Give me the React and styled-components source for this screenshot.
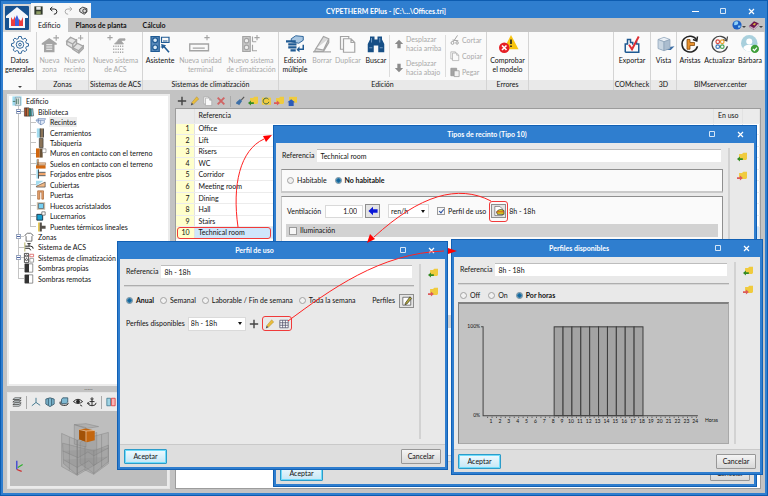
import styled, { createGlobalStyle, css } from "styled-components";

const GlobalStyle = createGlobalStyle`
  * {
    box-sizing: border-box;
  }
  body {
    margin: 0;
    overflow: hidden;
    font-family: Lato, "Open Sans", sans-serif;
    font-size: 7px;
    line-height: 9px;
    color: #111;
  }
  button, input, select {
    font: inherit;
    color: inherit;
    margin: 0;
    padding: 0;
    border: 0;
    background: none;
  }
  svg {
    display: block;
    flex: none;
  }
`;

/* ---------- main window ---------- */

const Window = styled.div`
  position: relative;
  display: flex;
  flex-direction: column;
  min-height: 100vh;
  border: 1px solid #0d5cb0;
  background: #c3c3c3;
  box-shadow: inset 0 0 0 2px #2f7ecf;
  padding: 0 2px 2px;
`;

const Header = styled.header`
  display: flex;
  background: #2f7ecf;
`;

const AppButton = styled.button`
  width: 28px;
  margin-top: 3px;
  padding: 2px;
  background: #d6d6d6;
`;

const HeaderRows = styled.div`
  flex: 1;
`;

const TitleBar = styled.div`
  display: flex;
  align-items: center;
  height: 17px;
`;

const QuickAccess = styled.div`
  display: flex;
  align-items: center;
  justify-content: space-around;
  align-self: flex-end;
  width: 60px;
  height: 15px;
  background: #f7f7f7;
`;

const Title = styled.h1`
  flex: 1;
  margin: 0;
  padding-top: 3px;
  font-size: 7px;
  font-weight: 700;
  text-align: center;
  color: #fff;
`;

const Controls = styled.div`
  display: flex;
  padding-top: 3px;
`;

const ControlButton = styled.button`
  display: flex;
  justify-content: center;
  align-items: center;
  width: 28px;
  height: 12px;
`;

const IconButton = styled.button`
  display: flex;
  align-items: center;
  justify-content: center;
`;

const TabBar = styled.nav`
  display: flex;
  height: 14px;
  background: #c3c3c3;
`;

const Tab = styled.button`
  padding: 0 ${({ $active }) => ($active ? 7 : 8)}px;
  font-weight: ${({ $active }) => ($active ? 400 : 700)};
  background: ${({ $active }) => ($active ? "#fafafa" : "none")};
`;

const HelpIcons = styled.div`
  display: flex;
  align-items: center;
  gap: 3px;
  margin-left: auto;
  padding-right: 2px;
`;

/* ---------- ribbon ---------- */

const Ribbon = styled.div`
  display: flex;
  height: 58px;
  background: #fafafa;
`;

const Group = styled.section`
  display: flex;
  flex-direction: column;
  ${({ $width }) => ($width ? `width: ${$width}px;` : "flex: 1;")}
  border-right: 1px solid #d4d4d4;
`;

const GroupItems = styled.div`
  display: flex;
  flex: 1;
  padding-top: 3px;
`;

const GroupName = styled.div`
  height: 10px;
  text-align: center;
  white-space: nowrap;
  background: #e9e9e9;
`;

const RibbonButton = styled.button`
  display: flex;
  flex: none;
  flex-direction: column;
  align-items: center;
  gap: 3px;
  width: ${({ $width }) => $width}px;
  white-space: nowrap;
  color: ${({ disabled }) => (disabled ? "#a9a9a9" : "#111")};
`;

const ButtonText = styled.span`
  line-height: 9px;
  white-space: pre;
  text-align: center;
`;

const SmallButtons = styled.div`
  display: flex;
  flex: none;
  flex-direction: column;
  justify-content: space-between;
  width: ${({ $width }) => $width}px;
  padding-left: 4px;
  border-left: 1px solid #dcdcdc;
  margin-bottom: 3px;
`;

const SmallButton = styled.button`
  display: flex;
  align-items: center;
  gap: 2px;
  text-align: left;
  white-space: pre;
  color: #a9a9a9;
`;

const DropMark = styled.span`
  align-self: center;
  margin: auto auto 2px;
  border: 2px solid transparent;
  border-top-color: #444;
  border-bottom: 0;
`;

/* ---------- workspace ---------- */

const Workspace = styled.main`
  display: flex;
  flex: 1;
  gap: 5px;
  padding: 4px;
`;

const LeftColumn = styled.aside`
  display: flex;
  flex-direction: column;
  width: 163px;
`;

const TreePanel = styled.div`
  flex: 1;
  border: 2px solid #ececec;
  background: #fff;
`;

const Splitter = styled.div`
  height: 6px;
  text-align: center;
  line-height: 3px;
  color: #666;
`;

const Tree = styled.ul`
  display: grid;
  grid-template-rows: repeat(18, 1fr);
  height: 188px;
  margin: 0;
  padding: 0 0 0 3px;
  list-style: none;
`;

const TreeRow = styled.li`
  display: flex;
  align-items: center;
  white-space: nowrap;
`;

const TreeLabel = styled.span`
  margin-left: 3px;
  padding: 0 1px;
  line-height: 10px;
  background: ${({ $selected }) => ($selected ? "#ececec" : "none")};
`;

const Branch = styled.span`
  display: flex;
  align-items: center;
  align-self: stretch;
  width: 12px;
  background:
    linear-gradient(#c4c4c4, #c4c4c4) 6px 0 / 1px ${({ $last }) => ($last ? "50%" : "100%")} no-repeat,
    ${({ $through }) =>
      $through
        ? "none"
        : "linear-gradient(#c4c4c4, #c4c4c4) 6px 50% / 6px 1px no-repeat"};
`;

const Expander = styled.button`
  width: 5px;
  height: 5px;
  margin-left: 4px;
  border: 1px solid #9aa6bd;
  background: linear-gradient(#4a62a5, #4a62a5) center / 3px 1px no-repeat #fff;
`;

const ViewPanel = styled.div`
  display: flex;
  flex-direction: column;
  height: 97px;
  padding: 0 2px 2px;
  border: 1px solid #e4e4e4;
  background: #ebebeb;
`;

const ViewTools = styled.div`
  display: flex;
  align-items: center;
  gap: 4px;
  height: 18px;
  padding-left: 2px;
`;

const ToolDivider = styled.span`
  width: 1px;
  height: ${({ $height }) => $height || 13}px;
  background: #a9a9a9;
`;

const Viewport = styled.div`
  flex: 1;
  min-height: 0;
  background: #bebebe;
`;

const RightColumn = styled.section`
  display: flex;
  flex: 1;
  flex-direction: column;
`;

const ListTools = styled.div`
  display: flex;
  align-items: center;
  gap: 3px;
  height: 14px;
  padding-left: 2px;
  ${ToolDivider} {
    margin: 0 1px;
  }
`;

const TablePanel = styled.div`
  flex: 1;
  border: 1px solid #9c9c9c;
  background: #fff;
`;

const Table = styled.table`
  width: 100%;
  height: 130px;
  border-collapse: collapse;
  th, td {
    padding: 0 4px;
    font-weight: 400;
    text-align: left;
    border-right: 1px solid #e2e2e2;
    border-bottom: 1px solid #ececec;
  }
  th {
    height: 14px;
    padding: 0 2px 0 4px;
    background: #ebebeb;
  }
`;

const NumberCell = styled.td`
  width: 18px;
  background: #ffffcc;
  && {
    text-align: right;
  }
`;

const Row = styled.tr`
  background: ${({ $selected }) => ($selected ? "#cfe6fb" : "#fff")};
`;

/* ---------- dialogs ---------- */

const Dialog = styled.section`
  position: absolute;
  left: ${({ $left }) => $left}px;
  top: ${({ $top }) => $top}px;
  display: flex;
  flex-direction: column;
  width: ${({ $width }) => $width}px;
  height: ${({ $height }) => $height}px;
  padding: 0 2px 2px;
  border: 1px solid #1160b4;
  background: #2f7ecf;
`;

const DialogTitle = styled.header`
  display: flex;
  align-items: center;
  height: 17px;
  color: #fff;
`;

const DialogName = styled.h2`
  flex: 1;
  margin: 0;
  font-size: 7px;
  font-weight: 700;
  text-align: center;
`;

const DialogBody = styled.div`
  display: flex;
  flex: 1;
  min-height: 0;
  background: #e9e9e9;
`;

const DialogMain = styled.div`
  display: flex;
  flex: 1;
  flex-direction: column;
  min-width: 0;
  padding: 6px 5px 5px 4px;
`;

const DialogSide = styled.div`
  display: flex;
  flex: none;
  flex-direction: column;
  align-items: center;
  gap: 9px;
  width: 26px;
  margin: 5px 0;
  padding-top: 4px;
  border-left: 2px solid #d2d2d2;
`;

const DialogFooter = styled.footer`
  display: flex;
  justify-content: space-between;
  align-items: center;
  height: 23px;
  padding: 0 4px;
  border-top: 1px solid #c9c9c9;
  background: #dedede;
`;

const PushButton = styled.button`
  width: ${({ $primary }) => ($primary ? 43 : 40)}px;
  height: 15px;
  border: 1px solid #979797;
  border-radius: 1px;
  background: linear-gradient(#f4f4f4, #d8d8d8);
  ${({ $primary }) =>
    $primary &&
    css`
      border-color: #2d9cc9;
      box-shadow: inset 0 0 0 1px #6fdcfb;
      background: linear-gradient(#effaff, #c5e6f5);
    `}
`;

const FieldRow = styled.label`
  display: flex;
  align-items: center;
  gap: 3px;
  padding: 0 2px;
`;

const TextInput = styled.input`
  flex: 1;
  min-width: 0;
  height: 13px;
  padding: 0 3px;
  border-top: 1px solid #bdbdbd;
  background: #fff;
`;

const NumberInput = styled.input`
  width: 38px;
  height: 13px;
  padding-right: 5px;
  border: 1px solid #d9d9d9;
  text-align: right;
  background: #fff;
`;

const Rule = styled.hr`
  width: 100%;
  height: 2px;
  margin: 7px 0 0;
  border: 0;
  border-top: 1px solid #aeaeae;
  border-bottom: 1px solid #d6d6d6;
`;

const Options = styled.div`
  display: flex;
  align-items: center;
  gap: ${({ $gap }) => $gap || 6}px;
  height: ${({ $height }) => $height}px;
  margin-top: ${({ $top }) => $top || 0}px;
  padding-left: 2px;
  white-space: nowrap;
`;

const Choice = styled.label`
  display: flex;
  align-items: center;
  gap: 3px;
  white-space: nowrap;
  &:has(input[type="radio"]:checked) {
    font-weight: 700;
  }
`;

const EditProfiles = styled.span`
  display: flex;
  align-items: center;
  gap: 4px;
  margin-left: auto;
`;

const Radio = styled.input.attrs({ type: "radio" })`
  appearance: none;
  width: 7px;
  height: 7px;
  border: 1px solid #a2a2a2;
  border-radius: 50%;
  background: #f1f1f1;
  &:checked {
    border-color: #6c8798;
    background: radial-gradient(circle, #16659a 0 1px, #2b7fb0 2px, #d4e6ef 3px);
  }
`;

const CheckBox = styled.input.attrs({ type: "checkbox" })`
  appearance: none;
  width: 8px;
  height: 8px;
  border: 1px solid #9a9a9a;
  background: #f6f6f6;
  &:checked::after {
    content: "";
    display: block;
    width: 2px;
    height: 4px;
    margin: 0 0 0 2px;
    border: solid #2a4fa0;
    border-width: 0 1px 1px 0;
    transform: rotate(40deg);
  }
`;

const SelectBox = styled.span`
  display: grid;
  align-items: center;
  width: ${({ $width }) => $width}px;
  height: 14px;
  border: 1px solid #dadada;
  background: #fff;
  > * {
    grid-area: 1 / 1;
  }
`;

const Select = styled.select`
  appearance: none;
  width: 100%;
  padding-left: 2px;
`;

const SelectMark = styled.span`
  justify-self: end;
  margin-right: 3px;
  border: 2px solid transparent;
  border-top: 3px solid #111;
  border-bottom: 0;
  pointer-events: none;
`;

const ToolButton = styled.button`
  display: flex;
  align-items: center;
  justify-content: center;
  width: 15px;
  height: 14px;
  border: 1px solid #8e8e8e;
  background: #e4e4e4;
`;

const Highlight = styled.span`
  display: flex;
  align-items: center;
  justify-content: space-around;
  width: ${({ $width }) => $width}px;
  height: ${({ $height }) => $height}px;
  border: 1px solid #f03a3a;
  border-radius: 3px;
`;

const RowHighlight = styled(Highlight)`
  position: absolute;
  left: 176px;
  top: 226px;
`;

const Box = styled.div`
  padding: 5px 4px;
  border: 1px solid #c9c9c9;
  border-top: 1px solid #8f8f8f;
  border-right-color: #8f8f8f;
  background: #fafafa;
`;

const KindBox = styled(Box)`
  display: flex;
  align-items: center;
  gap: 8px;
  height: 23px;
  margin: 7px 0 4px 1px;
  padding-left: 5px;
  box-shadow: 0 1px 0 #c9c9c9;
`;

const SystemsBox = styled(Box)`
  flex: 1;
  margin-left: 1px;
`;

const SystemRow = styled.div`
  display: flex;
  align-items: center;
  height: 18px;
  margin-bottom: 4px;
  padding-left: 1px;
  white-space: nowrap;
`;

const Spacer = styled.span`
  width: ${({ $width }) => $width}px;
`;

const SectionBar = styled.div`
  display: flex;
  align-items: center;
  height: 13px;
  margin-bottom: 78px;
  padding-left: 3px;
  background: #d2d2d2;
`;

const ChartFrame = styled.div`
  display: flex;
  flex: 1;
  min-height: 0;
  margin-top: 2px;
  border: 1px solid #a8a8a8;
  border-top: 2px solid #808080;
  border-left-color: #808080;
  background: #c2c2c2;
`;

const Arrows = styled.svg`
  position: absolute;
  left: -1px;
  top: -1px;
  pointer-events: none;
`;

/* ---------- drawings ---------- */

const G = "#a4a4a4";
const B = "#1f5a93";

const glyphs = {
  gear: (
    <g fill="none" stroke={B} strokeWidth="1.2">
      <path d="M10.3 2h3.4l.6 2.8 2 .9 2.500-1.600 2.300 2.400-1.500 2.400.8 2 2.900.7v3.200l-2.900.7-.8 2 1.500 2.400-2.300 2.300-2.500-1.500-2 .8-.6 2.900h-3.400l-.6-2.900-2-.8-2.500 1.500-2.300-2.300 1.500-2.400-.8-2-2.900-.7v-3.200l2.900-.7.8-2-1.500-2.400 2.300-2.400 2.500 1.600 2-.9z" />
      <circle cx="12" cy="12.800" r="5" />
      <circle cx="12" cy="12.800" r="1.800" />
    </g>
  ),
  zone: (
    <g fill={G}>
      <path d="M1 11 11 4l10 7v2h-3v10H4V13H1z" />
      <path d="M7 13h8M7 16h8M7 19h8" stroke="#fafafa" strokeWidth="1.300" />
      <path d="M19.500 0h1.500v3h3v1.500h-3v3h-1.500v-3h-3V3h3z" />
    </g>
  ),
  room: (
    <g fill="#e2e2e2" stroke={G} strokeWidth="1.800">
      <path d="m1 8 5-5 8 4-5 5zM1 8v5l8 5v-6M9 12l5-5v5l-5 5M9 17l6-6 8 4-6 6zM9 17v2l8 5v-3M17 21l6-6v3l-6 6" />
      <path d="M16 4h7M19.500 0v7" strokeWidth="1.400" />
    </g>
  ),
  shower: (
    <g fill={G} stroke={G}>
      <path d="M4 0v7M.5 3.500h7" strokeWidth="1.500" />
      <path d="M24 5h-7q-2 0-3 3l-4 4h12l-3-4q1-1 5-1z" />
      <path d="M9 14v2m0 2v2m0 2v2M12 14v2m0 2v2m0 2v2M15 14v2m0 2v2m0 2v2M18 14v2m0 2v2m0 2v2M21 14v2m0 2v2m0 2v2" strokeWidth="1.500" />
    </g>
  ),
  wizard: (
    <g fill="none" stroke={B} strokeWidth="1.600">
      <path d="M0 2h11v20H0z" fill="#5b8bbb" />
      <circle cx="5.500" cy="7" r="3.200" fill="#dcebf7" />
      <circle cx="5.500" cy="16.500" r="3.200" fill="#dcebf7" />
      <path d="M14 3h10v7H14zM16 8h6M13 16h3" />
      <path d="m17 15 7 8" strokeWidth="2.200" />
      <path d="m14.500 13 4 1-3 3z" fill={B} />
    </g>
  ),
  unit: (
    <g fill="none" stroke={G} strokeWidth="1.800">
      <path d="M-3 12h25v9H-3zM1 17.500h16" />
      <path d="M20 0v7M16.500 3.500h7" strokeWidth="1.500" />
    </g>
  ),
  climate: (
    <g fill="none" stroke={G} strokeWidth="1.500">
      <path d="M1 2h10v20H1z" fill="#c9c9c9" />
      <path d="M20 0v7M16.500 3.500h7M14 9V2M14 9h5M14 13v8h6" />
      <circle cx="6" cy="7.500" r="3" fill="#eee" />
      <circle cx="6" cy="16.500" r="3" fill="#eee" />
    </g>
  ),
  multi: (
    <g fill={B}>
      <path d="m7 5 6-4 10 1v5l-6 4-10-2z" fill="#a9c7e2" stroke={B} strokeWidth="1.200" />
      <path d="M0 7h13v3H0zM3 11h11v3H3zM3 15h11v3H3zM6 19h7v3H6z" />
      <path d="M22 13v5h-4v-3l-4 4.500 4 3.500v-3h6v-7z" />
    </g>
  ),
  erase: (
    <g fill="#d9d9d9" stroke={G} strokeWidth="1.600">
      <path d="M4 18 14 2l7 3-7 15zM4 18l-2 4h12l7-12V5" />
      <path d="M0 22.500h24" />
    </g>
  ),
  copy: (
    <g fill="#fafafa" stroke={G} strokeWidth="1.600">
      <path d="M2 2h11v17H2z" />
      <path d="M6 5h10l5 5v13H6zM16 5v5h5" />
    </g>
  ),
  binoculars: (
    <g fill="#174f86">
      <path d="M4 2h6v4h4V2h6v4l3 6v11h-8v-9H9v9H1V12l3-6z" />
      <path d="M3 17h4M17 17h4M6 4v6M17 4v6" stroke="#8fb3d6" />
    </g>
  ),
  check: (
    <g>
      <path d="m16 0 10 19H6z" fill="#f8c40f" />
      <path d="M16 6v6m0 2v2" stroke="#222" strokeWidth="2.200" />
      <circle cx="7" cy="17" r="7" fill="#e51e25" />
      <path d="m4 14 6 6m0-6-6 6" stroke="#fff" strokeWidth="2.200" />
    </g>
  ),
  exportCheck: (
    <g fill="none" strokeWidth="2">
      <path d="M3 23V12h3V6h4v4h3v3M3 23h18V12h-3V8" stroke={B} />
      <path d="m8 13 4 6L21 2" stroke="#dc2f34" strokeWidth="2.600" />
    </g>
  ),
  cube: (
    <g>
      <path d="m12 17 14-2-5 5H7z" fill="#3b6ea5" />
      <path d="m4 6 8-3 8 3-8 3z" fill="#eaf0f6" stroke="#8ea3b8" />
      <path d="m4 6 8 3v12l-8-3z" fill="#c9d6e2" stroke="#8ea3b8" />
      <path d="m20 6-8 3v12l8-3z" fill="#abbdcf" stroke="#8ea3b8" />
    </g>
  ),
  edges: (
    <g fill="none" stroke="#222" strokeWidth="2">
      <path d="M21 7A10.500 10.500 0 1 0 22 15" />
      <path d="m22 2-1 6-5-2" />
      <path d="M8 6v13h4v-5h6v-4h-6V6z" fill="#e8912d" stroke="#7c4306" strokeWidth="1" />
    </g>
  ),
  refresh: (
    <g fill="none" stroke="#444" strokeWidth="1.600">
      <path d="M21 7A10.500 10.500 0 1 0 22 15" />
      <path d="m22 2-1 6-5-2" />
      <circle cx="9" cy="9" r="2.400" stroke="#d8463b" strokeWidth="1.600" />
      <circle cx="15" cy="9" r="2.400" stroke="#eb9e28" strokeWidth="1.600" />
      <circle cx="9" cy="15.500" r="2.400" stroke="#3b78b9" strokeWidth="1.600" />
      <circle cx="15" cy="15.500" r="2.400" stroke="#47a251" strokeWidth="1.600" />
    </g>
  ),
  user: (
    <g>
      <circle cx="11" cy="11" r="11" fill="#a9d0dd" />
      <circle cx="11" cy="8.500" r="4" fill="#fff" />
      <path d="M3 18q1-5 8-5t8 5q-8 8-16 0z" fill="#fff" />
      <circle cx="18.500" cy="18.500" r="5.500" fill="#3f9f3a" />
      <path d="m15.800 18.500 2 2.200 3.500-4" fill="none" stroke="#fff" strokeWidth="1.600" />
    </g>
  ),
  up: <path d="M12 2 22 12h-6v10H8V12H2z" fill="#8b8b8b" />,
  down: <path d="M12 22 2 12h6V2h8v10h6z" fill="#8b8b8b" />,
  cut: (
    <g fill="none" stroke={G} strokeWidth="2.400">
      <path d="M18 1 8 16M20 14 6 12" />
      <circle cx="6" cy="19" r="3.500" />
      <circle cx="17" cy="19" r="3" />
    </g>
  ),
  paste: (
    <g fill={G} stroke="#8f8f8f" strokeWidth="1.600">
      <path d="M2 3h14v18H2z" />
      <path d="M10 9h12v14H10z" fill="#f1f1f1" />
    </g>
  ),
  save: (
    <g>
      <path d="M1 1h22v22H1z" fill="#31392c" />
      <path d="M6 2h12v8H6z" fill="#e8e8e8" />
      <path d="M6 14h12v8H6z" fill="#8d9b62" />
    </g>
  ),
  undo: <path d="M9 2 3 8l6 6M3 8h11q7 0 7 7t-8 7" fill="none" stroke="#222" strokeWidth="2.600" />,
  redo: <path d="m15 2 6 6-6 6m6-6H10q-7 0-7 7t8 7" fill="none" stroke="#aaa" strokeWidth="2.600" />,
  printer: (
    <g fill="#ddd" stroke="#333" strokeWidth="2.400">
      <path d="m2 8 8-5 11 4v9l-7 6-12-7z" />
      <circle cx="15" cy="13" r="5" />
    </g>
  ),
  globe: (
    <g>
      <circle cx="12" cy="12" r="11" fill="#1c5fc4" />
      <path d="M6 4q8-3 9 2t-5 6-5-1zM14 14q6-2 7 0t-5 6z" fill="#8fd0f7" />
    </g>
  ),
  book: (
    <g>
      <path d="m1 14 11-11 11 5-11 12z" fill="#6d1750" />
      <path d="m1 14 11 6 11-12v4L12 23 1 17z" fill="#efe6ee" stroke="#6d1750" />
      <path d="m9 11 4-4 4 2-4 4z" fill="#d9b63a" />
    </g>
  ),
  plus: <path d="M12 2v20M2 12h20" stroke="#444" strokeWidth="3.400" />,
  pencil: (
    <g>
      <path d="M4 16 16 2l5 5L8 20z" fill="#e9bd3c" stroke="#a58025" />
      <path d="m4 16 4 4-6 3z" fill="#444" />
    </g>
  ),
  cross: <path d="m4 4 16 16M20 4 4 20" stroke="#d06464" strokeWidth="4.500" />,
  brush: (
    <g>
      <path d="m14 9 7-8 2 2-7 8z" fill="#555" />
      <path d="M3 15 12 7l5 5-7 10-3-2-4-1z" fill="#3d6fa7" />
    </g>
  ),
  cycle: (
    <g>
      <path d="M2 4h22v17H2z" fill="#f0cb3e" />
      <path d="M18 8a7 7 0 1 0 1 6" fill="none" stroke="#40674b" strokeWidth="2.400" />
    </g>
  ),
  home: (
    <g>
      <path d="M5 2h19v14H5z" fill="#f0cb3e" />
      <path d="m1 15 9-7 9 7h-3v9H4v-9z" fill="#2c5bb8" />
    </g>
  ),
  folderIn: (
    <g>
      <path d="M5 5h7l3-3h9v14l-2 3H5z" fill="#f0cb3e" />
      <path d="m0 17 7-6v4h7v4H7v4z" fill="#338a22" />
    </g>
  ),
  folderOut: (
    <g>
      <path d="M5 5h7l3-3h9v14l-2 3H5z" fill="#f0cb3e" />
      <path d="m14 17-7-6v4H0v4h7v4z" fill="#dc5a5a" />
    </g>
  ),
  blueLeft: <path d="M1 12 12 2v6h11v8H12v6z" fill="#0a17d8" />,
  profile: (
    <g>
      <path d="M2 1h12l6 6v16H2z" fill="#fff" stroke="#555" strokeWidth="1.500" />
      <path d="M6 14q7-9 18-3v9H8z" fill="#e3d320" stroke="#222" strokeWidth="1.600" />
      <path d="M6 14h18" stroke="#c23125" strokeWidth="2" />
    </g>
  ),
  edit: (
    <g>
      <path d="M2 3h19v19H2z" fill="#fff" stroke="#333" strokeWidth="1.500" />
      <path d="M8 17 19 2l4 4-11 13-5 2z" fill="#b3a83a" stroke="#222" strokeWidth="1.400" />
    </g>
  ),
  grid: <path d="M2 3h20v18H2zM2 9h20M2 15h20M8.700 3v18M15.300 3v18" fill="#fff" stroke="#4c4c66" strokeWidth="1.800" />,

  /* tree */
  building: (
    <g>
      <path d="M1 1h22v22H1z" fill="#9fdcf0" />
      <path d="M8 3h12v20H8z" fill="#e8eef0" stroke="#567" />
      <path d="M11 6v14M15 6v14M2 13h6" stroke="#3c6f5a" strokeWidth="2" />
    </g>
  ),
  books: (
    <g stroke="#222" strokeWidth="1.200">
      <path d="M1 2h6v20H1z" fill="#a84b28" />
      <path d="M7 2h5v20H7z" fill="#e08d4c" />
      <path d="M12 4h5v18h-5z" fill="#2f9e98" />
      <path d="m17 5 4-1 2 17-5 1z" fill="#8fd5ea" />
    </g>
  ),
  space: <path d="m0 8 5-4h18l-3 5v5l-8 5-8-6zM1 8h18m-8 0v11M6 4v9" fill="#dfe8f7" stroke="#6a86b5" strokeWidth="1.600" />,
  wall: (
    <g>
      <path d="M2 1h8v22H2z" fill="#a3dcef" />
      <path d="M10 1h7v22h-7z" fill="#8a7458" />
      <path d="M9 1h2v22H9zM17 1h2v22h-2z" fill="#333" />
    </g>
  ),
  partition: <path d="M8 1h9v22H8z" fill="#8a7458" stroke="#333" strokeWidth="1.500" />,
  ground: (
    <g>
      <path d="M0 1h9v22H0z" fill="#d1670f" />
      <path d="M9 1h7v22H9z" fill="#6a5337" />
      <path d="M15 2h9v9h-9z" fill="#fff" stroke="#444" />
    </g>
  ),
  floor: (
    <g>
      <path d="M1 1h3v15H1z" fill="#a3dcef" />
      <path d="M0 15h23v8H0z" fill="#d1670f" />
      <path d="M3 1h3v14H3zM3 9h20v5H3z" fill="#f2c49b" stroke="#6a3f17" />
    </g>
  ),
  slab: (
    <g>
      <path d="M1 1h5v22H1z" fill="#a3dcef" />
      <path d="M6 1v22M6 8h17M6 16h17" stroke="#333" strokeWidth="2" />
      <path d="M7 9.500h16v5H7z" fill="#f2a66c" />
    </g>
  ),
  roof: (
    <g>
      <path d="M0 2h18L0 14z" fill="#a3dcef" />
      <path d="M1 15 22 5v12H1z" fill="#f2b884" stroke="#444" strokeWidth="1.600" />
    </g>
  ),
  door: <path d="M4 22V2h14v20h-4V5H9v17z" fill="#e9a672" stroke="#9b5522" strokeWidth="1.500" />,
  glass: (
    <g>
      <path d="M2 3h20v18H2z" fill="#c9b9a3" />
      <path d="M6 6h12v12H6z" fill="#77d0f2" stroke="#62737d" strokeWidth="2" />
    </g>
  ),
  skylight: (
    <g>
      <path d="M2 8h14v14H2z" fill="#1aa0cf" stroke="#123" strokeWidth="2" />
      <path d="M14 2h8v8h-8z" fill="#fff" stroke="#444" strokeWidth="1.500" />
    </g>
  ),
  bridge: (
    <g>
      <path d="M5 1h4v22H5z" fill="#e6c444" />
      <path d="M9 1h5v22H9zM9 9h14v7H9z" fill="#55504a" />
    </g>
  ),
  house: <path d="m2 8 6-5h8l6 5-3 3v11H5V11z" fill="#fff" stroke="#444" strokeWidth="1.800" />,
  tap: (
    <g fill="none" stroke="#222" strokeWidth="2.400">
      <path d="M2 1v22" stroke="#b5b36a" />
      <path d="M3 10h13q6 0 6 6M12 4v6M8 4h8M3 15h10l3 5" />
    </g>
  ),
  hvac: (
    <g fill="none" stroke="#222" strokeWidth="1.800">
      <path d="M1 1h10v22H1z" />
      <circle cx="6" cy="7" r="2.500" />
      <circle cx="6" cy="16" r="2.500" />
      <path d="M14 3h9v6h-9z" stroke="#d65353" />
      <path d="M14 13h9v9h-9z" stroke="#888" />
    </g>
  ),
  shade: (
    <g>
      <path d="M2 2h19v20H2z" fill="#fff" stroke="#555" strokeWidth="1.500" />
      <path d="M2 2h10v20H2z" fill="#333" />
    </g>
  ),

  /* 3D view */
  layers: <path d="m2 6 5-4h15l-5 4zM2 12l5-4h15l-5 4zM2 18l5-4h15l-5 4zM2 22h15l5-4" fill="#e4eef2" stroke="#333" strokeWidth="1.700" />,
  axes: <path d="M12 2v11L2 21M12 13l10 7" fill="none" stroke="#39728a" strokeWidth="2.200" />,
  box3d: <path d="M2 5 12 2l10 3v12l-10 6-10-6zM8 4v16M16 4v16" fill="#7fb9d2" stroke="#27485a" strokeWidth="1.800" />,
  orbit: (
    <g>
      <path d="M9 2h12v10l-4 4H6V6z" fill="#7fb9d2" stroke="#27485a" strokeWidth="1.800" />
      <path d="M3 11q-3 8 8 9t11-6" fill="none" stroke="#222" strokeWidth="2.400" />
    </g>
  ),
  eye: (
    <g fill="none" stroke="#222" strokeWidth="2.200">
      <path d="M1 11q11-11 22 0-11 9-22 0M17 19l5 3" />
      <circle cx="12" cy="11" r="3.600" fill="#222" />
    </g>
  ),
  anchor: (
    <g fill="none" stroke="#222" strokeWidth="2.200">
      <circle cx="12" cy="4.500" r="2.500" />
      <path d="M12 7v14M2 14q1 7 10 7t10-7M6 11h12M1 17l2-4 3 3" />
    </g>
  ),
  section: (
    <g strokeWidth="1.800">
      <path d="M2 3h9v18H2z" fill="#9fd3e4" stroke="#39728a" />
      <path d="M13 3h9v18h-9z" fill="#f8b5b5" stroke="#d92f2f" />
    </g>
  ),
};

const Icon = ({ name, size = 10 }) => (
  <svg width={size} height={size} viewBox="0 0 24 24" overflow="visible" aria-hidden="true">
    {glyphs[name]}
  </svg>
);

const Logo = () => (
  <svg width="24" height="24" viewBox="0 0 24 24" aria-hidden="true">
    <rect width="24" height="24" rx="1" fill="#17518f" />
    <path d="M12 1 1 10v2h3v10h16V12h3v-2z" fill="#f5f7fb" />
    <path d="M6 20v-9l2 3 2-4v10z" fill="#ee3d3d" />
    <path d="M10 20v-7l2-4 2 5v6z" fill="#3d5fe0" />
    <path d="M14 20v-7l2 2 2-4v9z" fill="#ee3d3d" />
  </svg>
);

const Minimize = () => (
  <svg width="7" height="7" viewBox="0 0 7 7">
    <path d="M0 3.500h7" stroke="#fff" />
  </svg>
);

const Maximize = () => (
  <svg width="7" height="7" viewBox="0 0 7 7">
    <path d="M.5.5h5v5h-5z" fill="none" stroke="#d5e6f7" />
  </svg>
);

const Close = () => (
  <svg width="7" height="7" viewBox="0 0 7 7">
    <path d="m1 1 5 5m0-5-5 5" stroke="#fff" strokeWidth="1.200" />
  </svg>
);

const Model = () => (
  <svg width="100%" height="100%" viewBox="0 0 156 77" preserveAspectRatio="xMinYMin meet">
    <g fill="#8c8c8c" fillOpacity=".28" stroke="#7c7c7c" strokeOpacity=".7" strokeWidth=".6">
      <path d="m53 23 16 7v36l-16-9zM69 30l20-8v32l-20 12z" />
      <path d="m66 14 12 3v20l-12-3zM66 14l12-1 13 3-13 2z" />
      <path d="m54 33 32 8 15-6v19L86 65 76 60l-8 5-13-11z" />
      <path d="M78 28 101 22v30L86 64 72 54V32z" />
      <path d="m54 41 16 7 10-6 6 4 15-8M55 50l14 8 12-7 5 5 14-9M69 30v35M86 40v25M77 36v24M61 27v34M94 24v34" />
    </g>
    <path d="m71 19 7-1 9 2v10l-8 2-8-3z" fill="#c4660f" />
    <path d="m71 19 7 1.500v11l-7-2.500z" fill="#a35207" />
    <path d="m71 19 7 1.500 9-.5M78 20.500v11" stroke="#f0d3b5" strokeWidth=".7" fill="none" />
    <path d="M7 60v-9" stroke="#2a32d6" strokeWidth="1.200" />
    <path d="m8 58 5-3" stroke="#2bb12b" strokeWidth="1.200" />
    <path d="m7 60 5 2" stroke="#cf3030" strokeWidth="1.200" />
  </svg>
);

const hours = Array.from({ length: 24 }, (_, i) => i + 1);
const hourX = (h) => 24 + h * 8.85;

const ProfileChart = () => (
  <svg width="100%" height="100%" viewBox="0 0 268 138" fontSize="5" fill="#111">
    {hours
      .filter((h) => h >= 8 && h < 18)
      .map((h) => (
        <rect key={h} x={hourX(h)} y="22.500" width="8.850" height="88.500" fill="#a3a3a3" stroke="#3c3c3c" />
      ))}
    <path d="M22 22.500h2V111h214" fill="none" stroke="#444" />
    <path d="M28 112.500h210" stroke="#444" strokeDasharray="1 3.425" />
    <text x="21" y="24" textAnchor="end">100%</text>
    <text x="21" y="112" textAnchor="end">0%</text>
    {hours.map((h) => (
      <text key={h} x={hourX(h) - 1} y="118" textAnchor="middle">{h}</text>
    ))}
    <text x="245" y="117">Horas</text>
  </svg>
);

/* ---------- data ---------- */

const tree = [
  ["Edificio", "building", 0],
  ["Biblioteca", "books", 1, "open"],
  ["Recintos", "space", 2, "selected"],
  ["Cerramientos", "wall", 2],
  ["Tabiquería", "partition", 2],
  ["Muros en contacto con el terreno", "ground", 2],
  ["Suelos en contacto con el terreno", "floor", 2],
  ["Forjados entre pisos", "slab", 2],
  ["Cubiertas", "roof", 2],
  ["Puertas", "door", 2],
  ["Huecos acristalados", "glass", 2],
  ["Lucernarios", "skylight", 2],
  ["Puentes térmicos lineales", "bridge", 2, "last"],
  ["Zonas", "house", 1, "closed"],
  ["Sistema de ACS", "tap", 1],
  ["Sistemas de climatización", "hvac", 1, "closed"],
  ["Sombras propias", "shade", 1],
  ["Sombras remotas", "shade", 1, "last"],
];

const rooms = [
  "Office", "Lift", "Risers", "WC", "Corridor",
  "Meeting room", "Dining", "Hall", "Stairs", "Technical room",
];

/* ---------- parts ---------- */

const Command = ({ icon, text, width, off, children }) => (
  <RibbonButton $width={width} disabled={off}>
    <Icon name={icon} size={18} />
    <ButtonText>{text}</ButtonText>
    {children}
  </RibbonButton>
);

const DialogFrame = ({ title, left, top, width, height, children }) => (
  <Dialog $left={left} $top={top} $width={width} $height={height} aria-label={title}>
    <DialogTitle>
      <DialogName>{title}</DialogName>
      <ControlButton aria-label="Maximizar"><Maximize /></ControlButton>
      <ControlButton aria-label="Cerrar"><Close /></ControlButton>
    </DialogTitle>
    <DialogBody>
      <DialogMain>{children}</DialogMain>
      <DialogSide>
        <IconButton aria-label="Importar"><Icon name="folderIn" /></IconButton>
        <IconButton aria-label="Exportar"><Icon name="folderOut" /></IconButton>
      </DialogSide>
    </DialogBody>
    <DialogFooter>
      <PushButton $primary>Aceptar</PushButton>
      <PushButton>Cancelar</PushButton>
    </DialogFooter>
  </Dialog>
);

const Reference = ({ value }) => (
  <FieldRow>
    Referencia
    <TextInput defaultValue={value} />
  </FieldRow>
);

const RadioChoice = ({ name, text, checked }) => (
  <Choice>
    <Radio name={name} defaultChecked={checked} />
    {text}
  </Choice>
);

const Dropdown = ({ value, width, id, label }) => (
  <SelectBox $width={width}>
    <Select id={id} aria-label={label}>
      <option>{value}</option>
    </Select>
    <SelectMark />
  </SelectBox>
);

const MainRibbon = () => (
  <Ribbon>
    <Group $width={34}>
      <GroupItems>
        <Command icon="gear" text={"Datos\ngenerales"} width={33}>
          <DropMark />
        </Command>
      </GroupItems>
    </Group>
    <Group $width={52}>
      <GroupItems>
        <Command icon="zone" text={"Nueva\nzona"} width={25} off />
        <Command icon="room" text={"Nuevo\nrecinto"} width={25} off />
      </GroupItems>
      <GroupName>Zonas</GroupName>
    </Group>
    <Group $width={54}>
      <GroupItems>
        <Command icon="shower" text={"Nuevo sistema\nde ACS"} width={53} off />
      </GroupItems>
      <GroupName>Sistemas de ACS</GroupName>
    </Group>
    <Group $width={136}>
      <GroupItems>
        <Command icon="wizard" text="Asistente" width={34} />
        <Command icon="unit" text={"Nueva unidad\nterminal"} width={47} off />
        <Command icon="climate" text={"Nuevo sistema\nde climatización"} width={54} off />
      </GroupItems>
      <GroupName>Sistemas de climatización</GroupName>
    </Group>
    <Group $width={208}>
      <GroupItems>
        <Command icon="multi" text={"Edición\nmúltiple"} width={32} />
        <Command icon="erase" text="Borrar" width={22} off />
        <Command icon="copy" text="Duplicar" width={30} off />
        <Command icon="binoculars" text="Buscar" width={26} />
        <SmallButtons $width={56}>
          <SmallButton disabled><Icon name="up" />{"Desplazar\nhacia arriba"}</SmallButton>
          <SmallButton disabled><Icon name="down" />{"Desplazar\nhacia abajo"}</SmallButton>
        </SmallButtons>
        <SmallButtons $width={41}>
          <SmallButton disabled><Icon name="cut" />Cortar</SmallButton>
          <SmallButton disabled><Icon name="copy" />Copiar</SmallButton>
          <SmallButton disabled><Icon name="paste" />Pegar</SmallButton>
        </SmallButtons>
      </GroupItems>
      <GroupName>Edición</GroupName>
    </Group>
    <Group $width={42}>
      <GroupItems>
        <Command icon="check" text={"Comprobar\nel modelo"} width={41} />
      </GroupItems>
      <GroupName>Errores</GroupName>
    </Group>
    <Group>
      <GroupItems />
      <GroupName />
    </Group>
    <Group $width={37}>
      <GroupItems>
        <Command icon="exportCheck" text="Exportar" width={36} />
      </GroupItems>
      <GroupName>COMcheck</GroupName>
    </Group>
    <Group $width={26}>
      <GroupItems>
        <Command icon="cube" text="Vista" width={25} />
      </GroupItems>
      <GroupName>3D</GroupName>
    </Group>
    <Group $width={88}>
      <GroupItems>
        <Command icon="edges" text="Aristas" width={26} />
        <Command icon="refresh" text="Actualizar" width={33} />
        <Command icon="user" text="Bárbara" width={28} />
      </GroupItems>
      <GroupName>BIMserver.center</GroupName>
    </Group>
  </Ribbon>
);

const BuildingTree = () => (
  <Tree>
    {tree.map(([text, icon, level, state]) => (
      <TreeRow key={text}>
        {level === 2 && <Branch $through />}
        {level > 0 && (
          <Branch $last={state === "last"}>
            {(state === "open" || state === "closed") && <Expander aria-label={text} />}
          </Branch>
        )}
        <Icon name={icon} />
        <TreeLabel $selected={state === "selected"}>{text}</TreeLabel>
      </TreeRow>
    ))}
  </Tree>
);

const App = () => {
  return (
    <>
      <GlobalStyle />
      <Window>
        <Header>
          <AppButton aria-label="Archivo"><Logo /></AppButton>
          <HeaderRows>
            <TitleBar>
              <QuickAccess>
                <IconButton aria-label="Guardar"><Icon name="save" size={9} /></IconButton>
                <IconButton aria-label="Deshacer"><Icon name="undo" size={9} /></IconButton>
                <IconButton aria-label="Rehacer"><Icon name="redo" size={9} /></IconButton>
                <IconButton aria-label="Imprimir"><Icon name="printer" size={9} /></IconButton>
              </QuickAccess>
              <Title>CYPETHERM EPlus - [C:\...\Offices.tri]</Title>
              <Controls>
                <ControlButton aria-label="Minimizar"><Minimize /></ControlButton>
                <ControlButton aria-label="Maximizar"><Maximize /></ControlButton>
                <ControlButton aria-label="Cerrar"><Close /></ControlButton>
              </Controls>
            </TitleBar>
            <TabBar>
              <Tab $active>Edificio</Tab>
              <Tab>Planos de planta</Tab>
              <Tab>Cálculo</Tab>
              <HelpIcons>
                <IconButton aria-label="Web"><Icon name="globe" /><DropMark /></IconButton>
                <IconButton aria-label="Ayuda"><Icon name="book" /><DropMark /></IconButton>
              </HelpIcons>
            </TabBar>
          </HeaderRows>
        </Header>
        <MainRibbon />

        <Workspace>
          <LeftColumn>
            <TreePanel><BuildingTree /></TreePanel>
            <Splitter>.....</Splitter>
            <ViewPanel>
              <ViewTools>
                <Icon name="layers" />
                <ToolDivider />
                <Icon name="axes" />
                <Icon name="box3d" />
                <Icon name="orbit" />
                <Icon name="eye" />
                <Icon name="anchor" />
                <ToolDivider />
                <Icon name="section" />
              </ViewTools>
              <Viewport><Model /></Viewport>
            </ViewPanel>
          </LeftColumn>

          <RightColumn>
            <ListTools>
              <IconButton aria-label="Añadir"><Icon name="plus" /></IconButton>
              <IconButton aria-label="Editar"><Icon name="pencil" /></IconButton>
              <IconButton aria-label="Duplicar"><Icon name="copy" /></IconButton>
              <IconButton aria-label="Borrar"><Icon name="cross" /></IconButton>
              <ToolDivider $height={11} />
              <IconButton aria-label="Limpiar"><Icon name="brush" /></IconButton>
              <IconButton aria-label="Importar"><Icon name="folderIn" /></IconButton>
              <IconButton aria-label="Actualizar"><Icon name="cycle" /></IconButton>
              <IconButton aria-label="Exportar"><Icon name="folderOut" /></IconButton>
              <IconButton aria-label="Biblioteca"><Icon name="home" /></IconButton>
            </ListTools>
            <TablePanel>
              <Table>
                <thead>
                  <tr>
                    <th />
                    <th>Referencia</th>
                    <th width="29">En&nbsp;uso</th>
                    <th width="17" />
                  </tr>
                </thead>
                <tbody>
                  {rooms.map((room, i) => (
                    <Row key={room} $selected={i === 9}>
                      <NumberCell>{i + 1}</NumberCell>
                      <td>{room}</td>
                      <td />
                      <td />
                    </Row>
                  ))}
                </tbody>
              </Table>
            </TablePanel>
          </RightColumn>
        </Workspace>

        <RowHighlight $width={94} $height={12} />

        <DialogFrame title="Tipos de recinto (Tipo 10)" left={272} top={124} width={484} height={362}>
          <Reference value="Technical room" />
          <KindBox>
            <RadioChoice name="kind" text="Habitable" />
            <RadioChoice name="kind" text="No habitable" checked />
          </KindBox>
          <SystemsBox>
            <SystemRow>
              <label htmlFor="ventilation">Ventilación</label>
              <Spacer $width={4} />
              <NumberInput id="ventilation" defaultValue="1.00" />
              <Spacer $width={2} />
              <ToolButton aria-label="Valor por defecto"><Icon name="blueLeft" /></ToolButton>
              <Spacer $width={8} />
              <Dropdown value="ren/h" width={41} label="Unidad" />
              <Spacer $width={8} />
              <Choice>
                <CheckBox defaultChecked />
                Perfil de uso
              </Choice>
              <Spacer $width={3} />
              <Highlight $width={19} $height={21}>
                <ToolButton aria-label="Editar perfil"><Icon name="profile" /></ToolButton>
              </Highlight>
              <Spacer $width={1} />
              8h - 18h
            </SystemRow>
            <SectionBar>
              <Choice>
                <CheckBox />
                Iluminación
              </Choice>
            </SectionBar>
            <SectionBar />
          </SystemsBox>
        </DialogFrame>

        <DialogFrame title="Perfil de uso" left={116} top={240} width={331} height={229}>
          <Reference value="8h - 18h" />
          <Rule />
          <Options $height={15} $top={6}>
            <RadioChoice name="period" text="Anual" checked />
            <RadioChoice name="period" text="Semanal" />
            <RadioChoice name="period" text="Laborable / Fin de semana" />
            <RadioChoice name="period" text="Toda la semana" />
            <EditProfiles>
              Perfiles
              <ToolButton aria-label="Perfiles"><Icon name="edit" /></ToolButton>
            </EditProfiles>
          </Options>
          <Options $height={15} $top={8} $gap={3}>
            <label htmlFor="profile">Perfiles disponibles</label>
            <Dropdown id="profile" value="8h - 18h" width={58} />
            <IconButton aria-label="Añadir perfil"><Icon name="plus" /></IconButton>
            <Highlight $width={30} $height={15}>
              <IconButton aria-label="Editar perfil"><Icon name="pencil" /></IconButton>
              <IconButton aria-label="Tabla de perfiles"><Icon name="grid" /></IconButton>
            </Highlight>
          </Options>
        </DialogFrame>

        <DialogFrame title="Perfiles disponibles" left={450} top={238} width={312} height={236}>
          <Reference value="8h - 18h" />
          <Rule />
          <Options $height={9} $top={6} $gap={8}>
            <RadioChoice name="mode" text="Off" />
            <RadioChoice name="mode" text="On" />
            <RadioChoice name="mode" text="Por horas" checked />
          </Options>
          <ChartFrame><ProfileChart /></ChartFrame>
        </DialogFrame>

        <Arrows width="768" height="496" viewBox="0 0 768 496" fill="none" stroke="#f22" strokeWidth="1">
          <path d="M238 227C232 185 240 150 264 139" />
          <path d="M491 201C458 184 420 195 374 237" />
          <path d="M288 321C330 290 380 253 444 251" />
          <g fill="#f00" stroke="none">
            <path d="m272 135-9 1 3 6z" />
            <path d="m367 243 3-9 5 5z" />
            <path d="m457 251-9-3v6z" />
          </g>
        </Arrows>
      </Window>
    </>
  );
};

export default App;
